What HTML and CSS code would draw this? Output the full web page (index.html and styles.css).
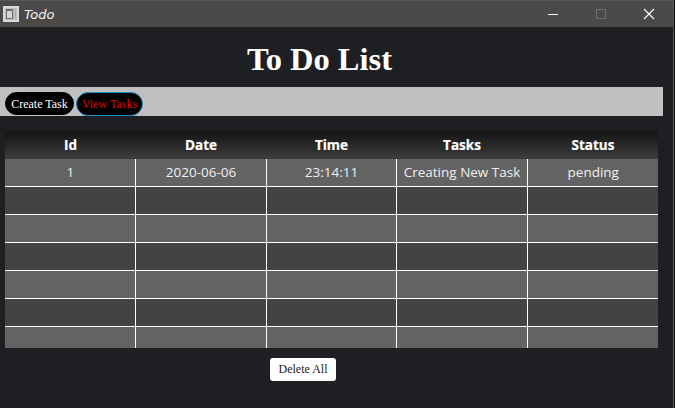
FILE: index.html
```html
<!DOCTYPE html>
<html lang="en">
<head>
    <meta charset="UTF-8">
    <title>Todo</title>
    <link rel="stylesheet" href="styles.css">
</head>
<body>
    <div class="window">
        <div class="titlebar">
            <svg class="app-icon" width="16" height="16" viewBox="0 0 16 16">
                <rect width="16" height="16" fill="#d8d8d8"/>
                <rect x="2" y="2" width="12" height="12" fill="#bdbdbd"/>
                <rect x="3" y="3" width="7" height="10" fill="#6e6e6e"/>
                <rect x="4" y="5" width="5" height="7" fill="#d4d4d4"/>
                <rect x="12" y="4" width="1" height="8" fill="#d9a441"/>
            </svg>
            <span class="app-name">Todo</span>
            <div class="window-controls">
                <svg class="control" width="46" height="27" viewBox="0 0 46 27">
                    <path d="M18 13.5h10" stroke="#fff" stroke-width="1"/>
                </svg>
                <svg class="control" width="46" height="27" viewBox="0 0 46 27">
                    <rect x="18.5" y="8.5" width="9" height="9" fill="none" stroke="#6f6e6c"/>
                </svg>
                <svg class="control" width="46" height="27" viewBox="0 0 46 27">
                    <path d="M18 8l10 10M28 8l-10 10" stroke="#fff" stroke-width="1.1"/>
                </svg>
            </div>
        </div>

        <div class="content">
            <h1>To Do List</h1>
            <nav class="navbar">
                <button class="nav-btn">Create Task</button>
                <button class="nav-btn active">View Tasks</button>
            </nav>

            <table class="tasks">
                <colgroup>
                    <col class="col-id">
                    <col class="col-date">
                    <col class="col-time">
                    <col class="col-tasks">
                    <col class="col-status">
                </colgroup>
                <thead>
                    <tr>
                        <th>Id</th>
                        <th>Date</th>
                        <th>Time</th>
                        <th>Tasks</th>
                        <th>Status</th>
                    </tr>
                </thead>
                <tbody>
                    <tr class="first">
                        <td>1</td>
                        <td>2020-06-06</td>
                        <td>23:14:11</td>
                        <td>Creating New Task</td>
                        <td>pending</td>
                    </tr>
                    <tr><td></td><td></td><td></td><td></td><td></td></tr>
                    <tr><td></td><td></td><td></td><td></td><td></td></tr>
                    <tr><td></td><td></td><td></td><td></td><td></td></tr>
                    <tr><td></td><td></td><td></td><td></td><td></td></tr>
                    <tr><td></td><td></td><td></td><td></td><td></td></tr>
                    <tr class="last"><td></td><td></td><td></td><td></td><td></td></tr>
                </tbody>
            </table>

            <div class="actions">
                <button class="delete-btn">Delete All</button>
            </div>
        </div>
    </div>
</body>
</html>
```

FILE: styles.css
```css
/* Reset */
* {
    margin: 0;
    padding: 0;
    box-sizing: border-box;
}

html, body {
    width: 675px;
    height: 408px;
    overflow: hidden;
    background-color: #111;
}

.window {
    width: 674px;
    height: 408px;
    background-color: #1e1f23;
    border-right: 1px solid #55565a;
    display: flex;
    flex-direction: column;
}

/* Title bar */
.titlebar {
    height: 27px;
    flex: none;
    display: flex;
    align-items: center;
    padding-left: 3px;
    background-color: #4b4a48;
    border-top: 1px solid #5a5a58;
}

.app-icon {
    flex: none;
}

.app-name {
    margin-left: 5px;
    color: #f0f0f0;
    font-family: "DejaVu Sans", sans-serif;
    font-style: italic;
    font-size: 13px;
}

.window-controls {
    margin-left: auto;
    margin-right: 1px;
    display: flex;
    gap: 2px;
}

.control {
    display: block;
}

/* Main */
.content {
    flex: 1;
    display: flex;
    flex-direction: column;
    width: 663px;
}

h1 {
    height: 60px;
    padding: 14px 24px 0 0;
    color: #fff;
    font-family: "Liberation Serif", serif;
    font-size: 32.5px;
    line-height: 37px;
    font-weight: bold;
    text-align: center;
}

.navbar {
    height: 29px;
    display: flex;
    align-items: flex-start;
    gap: 2px;
    padding: 5px 0 0 5px;
    background-color: #c0c0c0;
}

.nav-btn {
    width: 69px;
    height: 23px;
    padding-top: 1px;
    background-color: #000;
    color: #fff;
    border: 1px solid #000;
    border-radius: 12px;
    font-family: "Liberation Serif", serif;
    font-size: 12px;
}

.nav-btn.active {
    width: 67px;
    height: 24px;
    color: #e60000;
    border: 1px solid #1c8fc4;
}

/* Table */
.tasks {
    width: 653px;
    margin: 15px 0 0 5px;
    table-layout: fixed;
    border-collapse: collapse;
    font-family: "Open Sans", sans-serif;
    font-size: 13.5px;
}

.col-id { width: 130px; }
.col-date { width: 131px; }
.col-time { width: 130px; }
.col-tasks { width: 131px; }
.col-status { width: 131px; }

.tasks th {
    height: 28px;
    padding-left: 1px;
    color: #fff;
    font-size: 13.5px;
    font-weight: bold;
    -webkit-text-stroke: 0.2px #fff;
    background: linear-gradient(#141415, #3c3c3c);
}

.tasks td {
    height: 28px;
    padding-left: 1px;
    color: #f0f0f0;
    text-align: center;
    border-right: 1px solid #fff;
    border-bottom: 1px solid #fff;
}

.tasks td:last-child {
    border-right: none;
}

.tasks tbody tr:nth-child(odd) {
    background-color: #636363;
}

.tasks tbody tr:nth-child(even) {
    background-color: #434343;
}

.tasks tr.first td {
    height: 27px;
}

.tasks tr.last td {
    height: 22px;
    border-bottom: none;
}

/* Delete button */
.actions {
    margin-top: 10px;
    padding-left: 270px;
}

.delete-btn {
    width: 66px;
    height: 23px;
    background-color: #fff;
    color: #222;
    border: none;
    border-radius: 3px;
    font-family: "Liberation Serif", serif;
    font-size: 12px;
}
```
